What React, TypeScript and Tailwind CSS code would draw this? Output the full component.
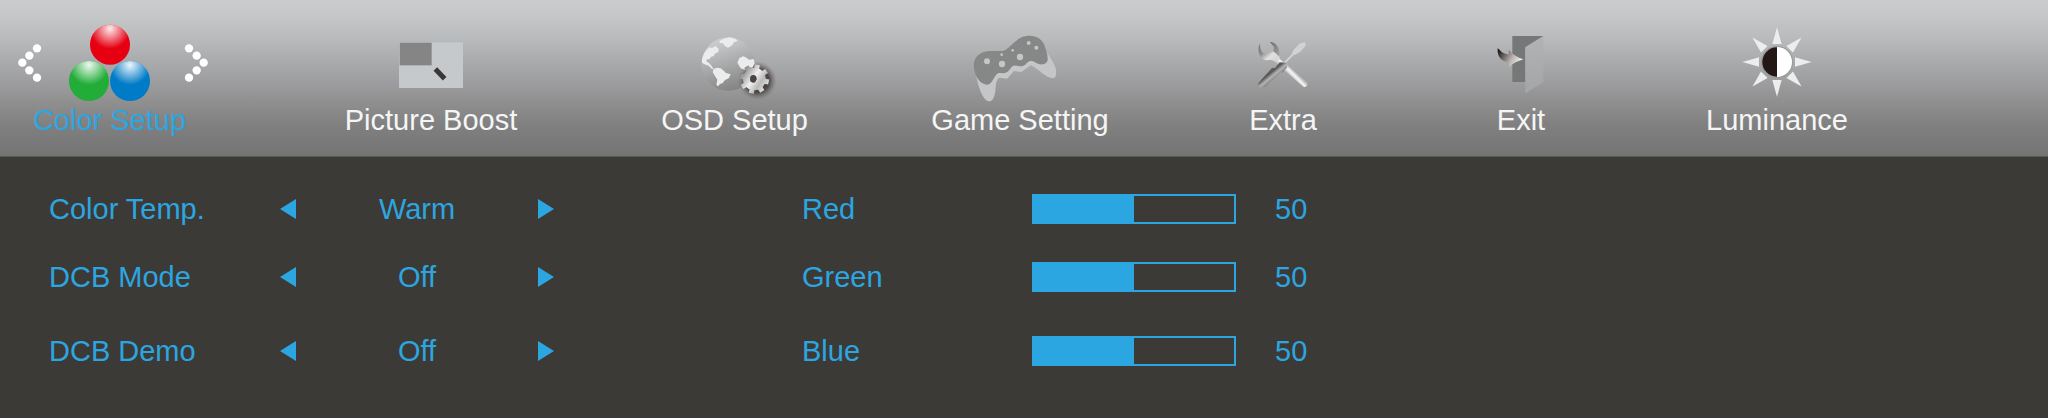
import { useState } from "react";
import type { ReactNode } from "react";

function Icon({ viewBox, children }: { viewBox: string; children: ReactNode }) {
  return (
    <svg viewBox={viewBox} className="h-[102px] w-[120px]" aria-hidden="true">
      {children}
    </svg>
  );
}

function ColorBalls() {
  const balls = [
    { id: "red", color: "#e60012", x: 330, y: 134 },
    { id: "green", color: "#22ac38", x: 267, y: 243 },
    { id: "blue", color: "#007bc7", x: 390, y: 243 },
  ];
  return (
    <svg viewBox="207 0 267 306" className="h-[102px] w-[89px]" aria-hidden="true">
      {balls.map((b) => (
        <g key={b.id}>
          <radialGradient id={b.id} gradientUnits="userSpaceOnUse" cx={b.x} cy={b.y - 48} r="60">
            <stop offset="0" stopColor="#fff" stopOpacity="0.92" />
            <stop offset="0.35" stopColor="#fff" stopOpacity="0.6" />
            <stop offset="1" stopColor="#fff" stopOpacity="0" />
          </radialGradient>
          <circle cx={b.x} cy={b.y} r="60" fill={b.color} />
          <circle cx={b.x} cy={b.y} r="60" fill={`url(#${b.id})`} />
        </g>
      ))}
    </svg>
  );
}

function DottedArrow({ flip }: { flip?: boolean }) {
  const dots = flip
    ? [[15, 13], [38, 35], [59, 56], [38, 79], [15, 101]]
    : [[57, 13], [34, 35], [13, 56], [34, 79], [57, 101]];
  return (
    <svg viewBox="0 0 72 114" className="h-[38px] w-6" aria-hidden="true">
      {dots.map(([x, y]) => (
        <circle key={y} cx={x} cy={y} r="12.5" fill="#fff" />
      ))}
    </svg>
  );
}

function PictureIcon() {
  return (
    <Icon viewBox="123 0 360 306">
      <rect x="207" y="127" width="192" height="137" fill="#c5c9cb" />
      <rect x="209" y="128" width="96" height="68" fill="#858585" />
      <path d="M316 207L344 236" stroke="#3a3836" strokeWidth="15" />
    </Icon>
  );
}

function GlobeIcon() {
  const teeth = [0, 45, 90, 135, 180, 225, 270, 315];
  return (
    <Icon viewBox="103 0 360 306">
      <defs>
        <linearGradient id="globe" x1="0.3" y1="0" x2="0.6" y2="1">
          <stop offset="0" stopColor="#cfd0d1" />
          <stop offset="0.5" stopColor="#a9aaab" />
          <stop offset="1" stopColor="#838383" />
        </linearGradient>
        <radialGradient id="gearShadow">
          <stop offset="0.6" stopColor="#3e3634" stopOpacity="0.85" />
          <stop offset="1" stopColor="#6e6a69" stopOpacity="0" />
        </radialGradient>
        <linearGradient id="gear" gradientUnits="userSpaceOnUse" x1="302" y1="212" x2="382" y2="266">
          <stop offset="0" stopColor="#7d7d7d" />
          <stop offset="0.25" stopColor="#bdbdbd" />
          <stop offset="0.45" stopColor="#f0f0f0" />
          <stop offset="0.7" stopColor="#b9b9b9" />
          <stop offset="1" stopColor="#ededed" />
        </linearGradient>
      </defs>
      <circle cx="262" cy="192" r="80" fill="url(#globe)" />
      <circle cx="350" cy="242" r="58" fill="url(#gearShadow)" />
      <g fill="#ececec">
        <path d="M236 123L250 116L268 112L284 116L291 122L280 127L274 136L262 143L252 137L246 129L238 130Z" />
        <path d="M184 188C183 170 192 154 206 142L214 144L224 138L234 146L233 156L224 160L219 168L210 171L207 177L198 178L197 184L206 190L212 197L219 207L214 207L204 197L192 193Z" />
        <path d="M219 207L229 203L240 205L250 213L256 219L270 223L264 235L253 240L246 249L238 252L232 259L227 254L230 239L221 225L216 216Z" />
        <path d="M290 188L296 174L308 169L318 173L325 179L339 177L342 190L335 203L322 202L312 209L300 205Z" />
      </g>
      <g stroke="url(#gear)" strokeWidth="15">
        {teeth.map((a) => {
          const r = ((a + 12) * Math.PI) / 180;
          const dx = Math.cos(r);
          const dy = Math.sin(r);
          return (
            <path
              key={a}
              d={`M${341 + dx * 28} ${237 + dy * 28}L${341 + dx * 44} ${237 + dy * 44}`}
            />
          );
        })}
      </g>
      <circle cx="341" cy="237" r="34" fill="url(#gear)" />
      <ellipse cx="338" cy="237" rx="10" ry="12" fill="#4a4442" />
      <path d="M331 246A10 12 0 0 0 348 240" stroke="#f5f5f5" strokeWidth="2" fill="none" />
    </Icon>
  );
}

function GamepadIcon() {
  const dots = [
    [231, 184, 9], [276, 192, 9.5], [330, 171, 9.5], [275, 164, 4],
    [308, 151, 4], [356, 129, 6], [379, 143, 6],
  ];
  return (
    <Icon viewBox="150 0 360 306">
      <path
        fill="#c4c6c7"
        d="M198 225C206 265 220 304 238 304C252 304 256 280 257 262C258 246 262 234 270 233L291 236L312 213L334 216L362 196C385 204 405 235 430 235C440 233 440 215 436 202C432 188 420 170 410 155L300 170Z"
      />
      <path
        fill="#868787"
        d="M192 205C188 175 205 155 240 153C260 152 275 156 287 149C300 141 315 121 335 112C360 102 390 108 402 133C408 150 414 165 413 180C411 193 395 195 385 192C375 188 368 180 358 184C348 190 345 198 335 199C325 200 318 193 308 198C300 206 295 217 285 219C275 221 265 216 258 225C248 238 245 254 230 254C210 252 196 232 192 205Z"
      />
      {dots.map(([x, y, r]) => (
        <circle key={x} cx={x} cy={y} r={r} fill="#c4c6c7" />
      ))}
    </Icon>
  );
}

function ToolsIcon() {
  return (
    <Icon viewBox="9 0 360 306">
      <defs>
        <linearGradient id="jaw" x1="0" y1="0" x2="1" y2="1">
          <stop offset="0" stopColor="#6c6c6c" />
          <stop offset="0.35" stopColor="#8e8e8e" />
          <stop offset="0.62" stopColor="#e0e0e0" />
          <stop offset="1" stopColor="#d0d0d0" />
        </linearGradient>
        <linearGradient id="prong" x1="0" y1="0" x2="0.6" y2="1">
          <stop offset="0" stopColor="#6e6e6e" />
          <stop offset="1" stopColor="#9c9c9c" />
        </linearGradient>
        <linearGradient id="handle" gradientUnits="userSpaceOnUse" x1="142" y1="214" x2="162" y2="238">
          <stop offset="0" stopColor="#6c6c6c" />
          <stop offset="0.3" stopColor="#565656" />
          <stop offset="0.65" stopColor="#b4b4b4" />
          <stop offset="1" stopColor="#858585" />
        </linearGradient>
        <linearGradient id="shaft" gradientUnits="userSpaceOnUse" x1="200" y1="217" x2="214" y2="203">
          <stop offset="0" stopColor="#c2c2c2" />
          <stop offset="0.5" stopColor="#f6f6f6" />
          <stop offset="1" stopColor="#b2b2b2" />
        </linearGradient>
      </defs>
      <path d="M192 190L228 154" stroke="#d3d4d5" strokeWidth="6" />
      <path d="M214 166L220 150L240 130L256 126L257 137L241 155L226 164Z" fill="#d0d2d3" />
      <path d="M162 172L254 252" stroke="url(#shaft)" strokeWidth="17" strokeLinecap="round" />
      <path
        fill="url(#prong)"
        d="M150 126C160 125 170 133 175 144C178 152 178 162 177 170L160 156L162 142Z"
      />
      <path
        fill="url(#jaw)"
        d="M121 130C112 144 114 167 128 177C139 184 150 178 158 181L172 186L180 172L160 154L147 157L136 162C124 158 118 146 121 130Z"
      />
      <path
        fill="url(#handle)"
        d="M116 248L156 203L165 204L179 187L198 188L202 202L187 218L183 216L136 261L121 263C115 260 113 254 116 248Z"
      />
    </Icon>
  );
}

function ExitIcon() {
  return (
    <Icon viewBox="-27 0 360 306">
      <defs>
        <linearGradient id="door" x1="0" y1="0" x2="0" y2="1">
          <stop offset="0" stopColor="#b1b3b4" />
          <stop offset="1" stopColor="#a4a5a6" />
        </linearGradient>
        <linearGradient id="enter" x1="0" y1="0.2" x2="1" y2="0.6">
          <stop offset="0" stopColor="#1d1715" />
          <stop offset="0.35" stopColor="#7a7573" />
          <stop offset="0.6" stopColor="#bcb4b2" />
          <stop offset="1" stopColor="#f4f4f4" />
        </linearGradient>
      </defs>
      <path d="M127 108H221L166 142V246H127Z" fill="#767777" />
      <path d="M166 142L220 108V246L166 280Z" fill="url(#door)" />
      <path
        d="M83 145C92 150 96 163 117 163L116 150C128 163 142 172 160 178C145 183 128 190 117 201L118 187C96 186 81 172 83 145Z"
        fill="url(#enter)"
      />
    </Icon>
  );
}

function SunIcon() {
  const rays = [0, 45, 90, 135, 180, 225, 270, 315];
  return (
    <Icon viewBox="111 0 360 306">
      {rays.map((a) => (
        <path key={a} d="M291 82L305 132H277Z" fill="#eceded" transform={`rotate(${a} 291 186)`} />
      ))}
      <circle cx="291" cy="186" r="48" fill="#9a9a9a" />
      <path d="M291 142A44 44 0 0 0 291 230Z" fill="#231815" />
      <path d="M291 141A45 45 0 0 1 291 231Z" fill="#fff" />
    </Icon>
  );
}

const tabs: { label: string; icon: ReactNode }[] = [
  { label: "Picture Boost", icon: <PictureIcon /> },
  { label: "OSD Setup", icon: <GlobeIcon /> },
  { label: "Game Setting", icon: <GamepadIcon /> },
  { label: "Extra", icon: <ToolsIcon /> },
  { label: "Exit", icon: <ExitIcon /> },
  { label: "Luminance", icon: <SunIcon /> },
];

function Stepper({ label, options }: { label: string; options: string[] }) {
  const [index, setIndex] = useState(0);
  const step = (by: number) => setIndex((index + by + options.length) % options.length);
  return (
    <>
      <span>{label}</span>
      <div role="group" aria-label={label} className="flex items-center justify-between">
        <button type="button" aria-label={`Previous ${label}`} onClick={() => step(-1)}>
          <svg viewBox="0 0 16 20" className="h-5 w-4" fill="currentColor" aria-hidden="true">
            <path d="M16 0V20L0 10Z" />
          </svg>
        </button>
        <output>{options[index]}</output>
        <button type="button" aria-label={`Next ${label}`} onClick={() => step(1)}>
          <svg viewBox="0 0 16 20" className="h-5 w-4" fill="currentColor" aria-hidden="true">
            <path d="M0 0V20L16 10Z" />
          </svg>
        </button>
      </div>
    </>
  );
}

function Level({ label }: { label: string }) {
  const [value, setValue] = useState(50);
  const id = `level-${label.toLowerCase()}`;
  return (
    <>
      <label htmlFor={id} className="col-start-4">
        {label}
      </label>
      <input
        id={id}
        type="range"
        min={0}
        max={100}
        value={value}
        onChange={(e) => setValue(Number(e.target.value))}
        className="h-[30px] w-full appearance-none border-2 border-[#2ca6e0] [&::-webkit-slider-thumb]:h-0 [&::-webkit-slider-thumb]:w-0 [&::-webkit-slider-thumb]:appearance-none"
        style={{
          background: `linear-gradient(to right, #2ca6e0 ${value}%, transparent ${value}%)`,
        }}
      />
      <output htmlFor={id} className="col-start-7">
        {value}
      </output>
    </>
  );
}

const rowClass =
  "grid grid-cols-[231fr_274fr_248fr_230fr_204fr_39fr_773fr] items-center";

export default function App() {
  return (
    <div className="min-h-screen bg-[#3c3a36] font-['Liberation_Sans',Arial,sans-serif] text-[29px] leading-9">
      <nav
        aria-label="Main menu"
        className="grid grid-cols-[219fr_424fr_183fr_388fr_138fr_338fr_174fr_184fr] border-b border-[#5a5956] bg-[linear-gradient(to_bottom,#c9cbcc_0%,#c6c8c9_8%,#b8babb_25%,#abacae_38%,#9b9b9d_55%,#929292_63%,#808080_80%,#747474_100%)] pb-[18px] text-[#f5f5f5]"
      >
        <div className="flex flex-col items-center text-[#2ca6e0]">
          <div className="flex w-full items-center justify-between pr-[11px] pl-[18px]">
            <button type="button" aria-label="Previous menu" className="pt-6">
              <DottedArrow />
            </button>
            <ColorBalls />
            <button type="button" aria-label="Next menu" className="pt-6">
              <DottedArrow flip />
            </button>
          </div>
          <button type="button" aria-current="page" className="whitespace-nowrap">
            Color Setup
          </button>
        </div>
        {tabs.map((tab) => (
          <button
            key={tab.label}
            type="button"
            className="flex flex-col items-center whitespace-nowrap"
          >
            {tab.icon}
            <span>{tab.label}</span>
          </button>
        ))}
      </nav>
      <main className="pt-[34px] pl-[49px] text-[#2ca6e0]">
        <div className={rowClass}>
          <Stepper label="Color Temp." options={["Warm", "Cool", "Normal"]} />
          <Level label="Red" />
        </div>
        <div className={`${rowClass} mt-8`}>
          <Stepper label="DCB Mode" options={["Off", "On"]} />
          <Level label="Green" />
        </div>
        <div className={`${rowClass} mt-[38px]`}>
          <Stepper label="DCB Demo" options={["Off", "On"]} />
          <Level label="Blue" />
        </div>
      </main>
    </div>
  );
}
